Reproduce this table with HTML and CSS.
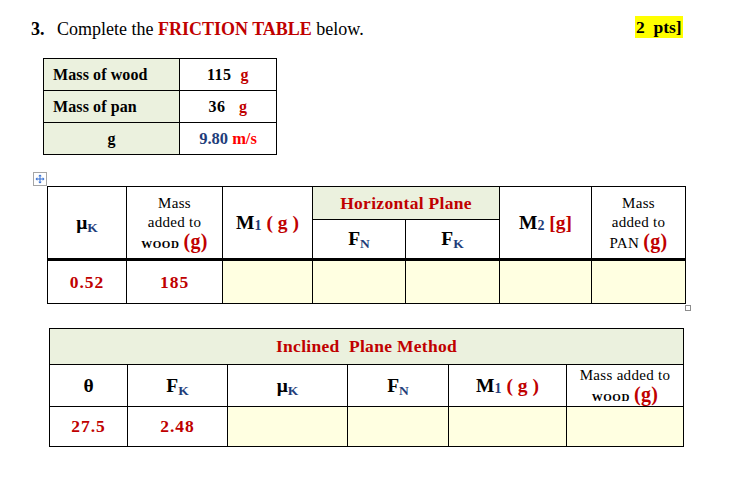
FILE: index.html
```html
<!DOCTYPE html>
<html>
<head>
<meta charset="utf-8">
<link rel="stylesheet" href="styles.css">
</head>
<body>
<div class="page">
  <div class="title-row">
    <div class="title"><span class="num">3.</span><span class="ttext">Complete the <b class="red">FRICTION TABLE</b> below.</span></div>
    <div class="pts">2&nbsp; pts]</div>
  </div>

  <table class="given">
    <tr><td class="lbl">Mass of wood</td><td class="val">115&nbsp; <span class="red">g</span></td></tr>
    <tr><td class="lbl">Mass of pan</td><td class="val">36&nbsp;&nbsp; <span class="red">g</span></td></tr>
    <tr><td class="lbl c">g</td><td class="val tnr"><span class="blue">9.80</span> <span class="bright">m/s</span></td></tr>
  </table>

  <div class="t1wrap">
    <div class="move"><svg width="10" height="10" viewBox="0 0 10 10"><path d="M5 0.5L3.2 2.3H4.5V4.5H2.3V3.2L0.5 5L2.3 6.8V5.5H4.5V7.7H3.2L5 9.5L6.8 7.7H5.5V5.5H7.7V6.8L9.5 5L7.7 3.2V4.5H5.5V2.3H6.8Z" fill="#2f6bd1"/></svg></div>
    <table class="main">
      <colgroup><col style="width:79px"><col style="width:96px"><col style="width:90px"><col style="width:93px"><col style="width:94px"><col style="width:92px"><col style="width:94px"></colgroup>
      <tr class="h1">
        <td rowspan="2" class="big">μ<sub class="sk">K</sub></td>
        <td rowspan="2" class="small">Mass<br>added to<br><span class="sc">wood</span> <span class="pg">(g)</span></td>
        <td rowspan="2" class="big">M<sub class="s1">1</sub><span class="red"> ( g )</span></td>
        <td colspan="2" class="green hp">Horizontal Plane</td>
        <td rowspan="2" class="big">M<sub class="s1">2</sub> <span class="red">[g]</span></td>
        <td rowspan="2" class="small">Mass<br>added to<br>PAN <span class="pg">(g)</span></td>
      </tr>
      <tr class="h2">
        <td class="big">F<sub class="sk">N</sub></td>
        <td class="big">F<sub class="sk">K</sub></td>
      </tr>
      <tr class="data">
        <td class="dv">0.52</td>
        <td class="dv">185</td>
        <td class="yel"></td><td class="yel"></td><td class="yel"></td><td class="yel"></td><td class="yel"></td>
      </tr>
    </table>
    <div class="handle"></div>
  </div>

  <table class="incl">
    <colgroup><col style="width:78px"><col style="width:100px"><col style="width:120px"><col style="width:101px"><col style="width:118px"><col style="width:117px"></colgroup>
    <tr class="ih"><td colspan="6" class="green hp">Inclined&nbsp; Plane Method</td></tr>
    <tr class="ir">
      <td class="big">θ</td>
      <td class="big">F<sub class="sk">K</sub></td>
      <td class="big">μ<sub class="sk">K</sub></td>
      <td class="big">F<sub class="sk">N</sub></td>
      <td class="big">M<sub class="s1">1</sub><span class="red"> ( g )</span></td>
      <td class="small tight">Mass added to<br><span class="sc">wood</span> <span class="pg">(g)</span></td>
    </tr>
    <tr class="idata">
      <td class="dv">27.5</td>
      <td class="dv">2.48</td>
      <td class="yel"></td><td class="yel"></td><td class="yel"></td><td class="yel"></td>
    </tr>
  </table>
</div>
</body>
</html>
```

FILE: styles.css
```css
* { box-sizing: border-box; }
body { margin: 0; background: #fff; font-family: "Liberation Serif", serif; color: #000; }
.page { width: 729px; height: 500px; padding: 17px 0 0 0; position: relative; }

.title-row { display: flex; align-items: flex-start; height: 33px; padding-left: 31px; }
.title { font-size: 18px; line-height: 24px; display: flex; width: 604px; }
.num { font-weight: bold; width: 26px; }
.red { color: #c00000; }
.pts { font-weight: bold; font-size: 17.5px; background: #ffff00; line-height: 22px; height: 22px; padding: 0 1px; margin-top: -1px; }

.given { border-collapse: collapse; margin: 8px 0 0 43px; font-size: 16px; font-weight: bold; }
.given td { border: 1px solid #000; height: 32px; padding: 0; }
.given .lbl { width: 136px; background: #ebf1de; padding-left: 9px; letter-spacing: 0.1px; }
.given .lbl.c { text-align: center; padding-left: 0; }
.given .val { width: 97px; text-align: center; letter-spacing: 0.5px; }
.given .tnr { font-size: 16.5px; letter-spacing: 0; }
.blue { color: #1f3d7a; }
.bright { color: #ff0000; }

.t1wrap { position: relative; margin: 31px 0 0 47px; width: 639px; }
.move { position: absolute; left: -14px; top: -14px; width: 14px; height: 14px; border: 1px solid #a6a6a6; background: #fff; display: flex; align-items: center; justify-content: center; }
.handle { position: absolute; right: -5px; bottom: -7px; width: 6px; height: 6px; border: 1px solid #8c8c8c; background: #fff; }

table.main, table.incl { border-collapse: collapse; table-layout: fixed; }
.main td, .incl td { border: 1px solid #000; text-align: center; padding: 0; }
.main .h1 td { height: 33px; }
.main .h2 td { height: 40px; }
.main .data td { height: 44px; border-top: 3px solid #000; }

.big { font-weight: bold; font-size: 19.5px; }
.small { font-size: 15px; line-height: 19px; padding-top: 1px !important; letter-spacing: 0.3px; }
.sc { font-variant: small-caps; font-weight: bold; text-transform: lowercase; font-size: 15px; letter-spacing: 0.5px; }
.pg { color: #c00000; font-weight: bold; font-size: 20px; }
.sk { color: #1f3d7a; font-size: 13.5px; vertical-align: -3px; line-height: 0; }
.s1 { color: #1f3d7a; font-size: 14px; vertical-align: -1px; line-height: 0; font-weight: bold; }
.green { background: #ebf1de; }
.hp { color: #c00000; font-weight: bold; font-size: 17.5px; letter-spacing: 0.3px; }
.yel { background: #ffffe1; }
.dv { color: #c00000; font-weight: bold; font-size: 17.5px; letter-spacing: 1px; }

.incl { margin: 24px 0 0 49px; }
.incl .ih td { height: 36px; }
.incl .ir td { height: 42px; }
.incl .idata td { height: 40px; }
```
